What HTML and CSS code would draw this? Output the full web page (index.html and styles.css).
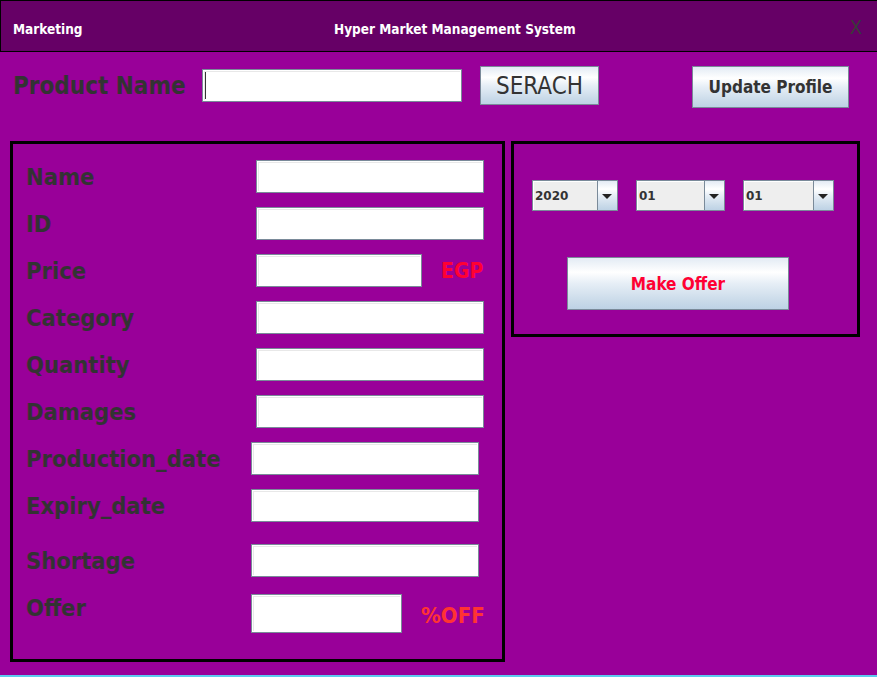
FILE: index.html
```html
<!DOCTYPE html>
<html>
<head>
<meta charset="utf-8">
<title>Hyper Market Management System</title>
<link rel="stylesheet" href="styles.css">
</head>
<body>
<div class="window">
  <header class="titlebar">
    <span class="brand">Marketing</span>
    <span class="title">Hyper Market Management System</span>
    <span class="close">X</span>
  </header>

  <div class="toolbar">
    <span class="product-label">Product Name</span>
    <div class="field search-field"><span class="caret"></span></div>
    <button class="btn btn-search">SERACH</button>
    <button class="btn btn-profile">Update Profile</button>
  </div>

  <div class="panels">
    <section class="panel form-panel">
      <div class="row"><span class="label">Name</span><div class="field"></div></div>
      <div class="row"><span class="label">ID</span><div class="field"></div></div>
      <div class="row"><span class="label">Price</span><div class="field short"></div><span class="unit egp">EGP</span></div>
      <div class="row"><span class="label">Category</span><div class="field"></div></div>
      <div class="row"><span class="label">Quantity</span><div class="field"></div></div>
      <div class="row"><span class="label">Damages</span><div class="field"></div></div>
      <div class="row narrow"><span class="label">Production_date</span><div class="field"></div></div>
      <div class="row narrow"><span class="label">Expiry_date</span><div class="field"></div></div>
      <div class="row narrow shortage"><span class="label">Shortage</span><div class="field"></div></div>
      <div class="row narrow offer"><span class="label">Offer</span><div class="field offer-field"></div><span class="unit off">%OFF</span></div>
    </section>

    <section class="panel offer-panel">
      <div class="combos">
        <div class="combo c-year"><span class="combo-value">2020</span><span class="combo-arrow"></span></div>
        <div class="combo c-month"><span class="combo-value">01</span><span class="combo-arrow"></span></div>
        <div class="combo c-day"><span class="combo-value">01</span><span class="combo-arrow"></span></div>
      </div>
      <button class="btn btn-offer">Make Offer</button>
    </section>
  </div>

  <div class="bottom-line"></div>
</div>
</body>
</html>
```

FILE: styles.css
```css
html, body {
  margin: 0;
  padding: 0;
  background: #990099;
}

.window {
  width: 877px;
  height: 677px;
  background: #990099;
  display: flex;
  flex-direction: column;
  font-family: "DejaVu Sans Condensed", "DejaVu Sans", sans-serif;
  font-stretch: condensed;
  overflow: hidden;
}

/* title bar */
.titlebar {
  background: #660066;
  border-top: 1px solid #000;
  border-left: 1px solid #000;
  border-bottom: 1px solid #000;
  display: flex;
  align-items: center;
  color: #fff;
  font-weight: bold;
  font-size: 13.5px;
  padding-top: 6px;
  box-sizing: content-box;
  height: 44px;
}

.brand {
  width: 321px;
  padding-left: 12px;
}

.close {
  margin-left: auto;
  margin-right: 15px;
  color: #3a3a3a;
  font-weight: normal;
  font-size: 20px;
  font-family: "DejaVu Sans Condensed", "DejaVu Sans", sans-serif;
  margin-top: -4px;
}

/* toolbar */
.toolbar {
  display: flex;
  align-items: flex-start;
  padding: 14px 0 0 13px;
  height: 42px;
}

.product-label {
  width: 189px;
  font-size: 24px;
  font-weight: bold;
  color: #333333;
  margin-top: 6px;
  line-height: 28px;
}

.field {
  background: #fff;
  border: 1px solid #7a8a99;
  box-shadow: inset 0 0 0 1px #fff, inset 1px 1px 0 1px #e8e8e8;
  box-sizing: border-box;
  width: 228px;
  height: 33px;
  position: relative;
}

.search-field {
  width: 260px;
  margin-top: 3px;
}

.caret {
  position: absolute;
  left: 2px;
  top: 2px;
  width: 1px;
  height: 27px;
  background: #333;
}

.btn {
  font-family: "DejaVu Sans Condensed", "DejaVu Sans", sans-serif;
  font-stretch: condensed;
  border: 1px solid #7a8a99;
  background: linear-gradient(to bottom, #e3ebf4 0%, #ffffff 28%, #e6eef6 50%, #c9dae9 85%, #bed2e5 100%);
  color: #333333;
  padding: 0;
  margin: 0;
  box-sizing: border-box;
  cursor: default;
}

.btn-search {
  margin-left: 18px;
  width: 119px;
  height: 39px;
  font-size: 24px;
  font-weight: normal;
}

.btn-profile {
  margin-left: 93px;
  width: 157px;
  height: 42px;
  font-size: 17px;
  font-weight: bold;
}

/* panels */
.panels {
  display: flex;
  align-items: flex-start;
  margin-top: 33px;
  padding-left: 10px;
  gap: 6px;
}

.panel {
  border: 3px solid #000;
  box-sizing: border-box;
}

.form-panel {
  width: 495px;
  height: 521px;
  padding: 16px 0 0 13px;
  display: flex;
  flex-direction: column;
  gap: 14px;
}

.row {
  display: flex;
  align-items: center;
  height: 33px;
}

.label {
  width: 230px;
  flex: none;
  font-size: 23.5px;
  font-weight: bold;
  color: #333333;
}

.row.narrow .label {
  width: 225px;
}

.field.short {
  width: 166px;
}

.unit {
  font-weight: bold;
  margin-left: 19px;
}

.egp {
  color: #ff0033;
  font-size: 21px;
}

.off {
  color: #ff3333;
  font-size: 22px;
  margin-top: 4px;
}

.row.shortage {
  margin-top: 8px;
}

.row.offer {
  margin-top: 3px;
  height: 39px;
}

.row.offer .label {
  align-self: flex-start;
  margin-top: 0;
}

.field.offer-field {
  width: 151px;
  height: 39px;
}

/* right panel */
.offer-panel {
  width: 349px;
  height: 196px;
  padding: 36px 0 0 18px;
}

.combos {
  display: flex;
  gap: 18px;
}

.combo {
  display: flex;
  height: 31px;
  border: 1px solid #7a8a99;
  box-sizing: border-box;
  background: #eeeeee;
}

.c-year { width: 86px; }
.c-month { width: 89px; }
.c-day { width: 91px; }

.combo-value {
  flex: 1;
  padding-left: 2px;
  display: flex;
  align-items: center;
  font-family: "DejaVu Sans", sans-serif;
  font-stretch: normal;
  font-size: 12px;
  font-weight: bold;
  color: #333333;
  border-right: 1px solid #7a8a99;
  box-shadow: inset 1px 1px 0 #fff;
}

.combo-arrow {
  width: 19px;
  flex: none;
  position: relative;
  background: linear-gradient(to bottom, #e3ebf4 0%, #ffffff 28%, #e6eef6 50%, #c9dae9 85%, #bed2e5 100%);
}

.combo-arrow::after {
  content: "";
  position: absolute;
  left: 4px;
  top: 13px;
  border-left: 5px solid transparent;
  border-right: 5px solid transparent;
  border-top: 5px solid #222;
}

.btn-offer {
  display: block;
  margin-top: 46px;
  margin-left: 35px;
  width: 222px;
  height: 53px;
  font-size: 17px;
  font-weight: bold;
  color: #ff0033;
}

.bottom-line {
  margin-top: auto;
  height: 2px;
  background: #5ccbee;
}
```
